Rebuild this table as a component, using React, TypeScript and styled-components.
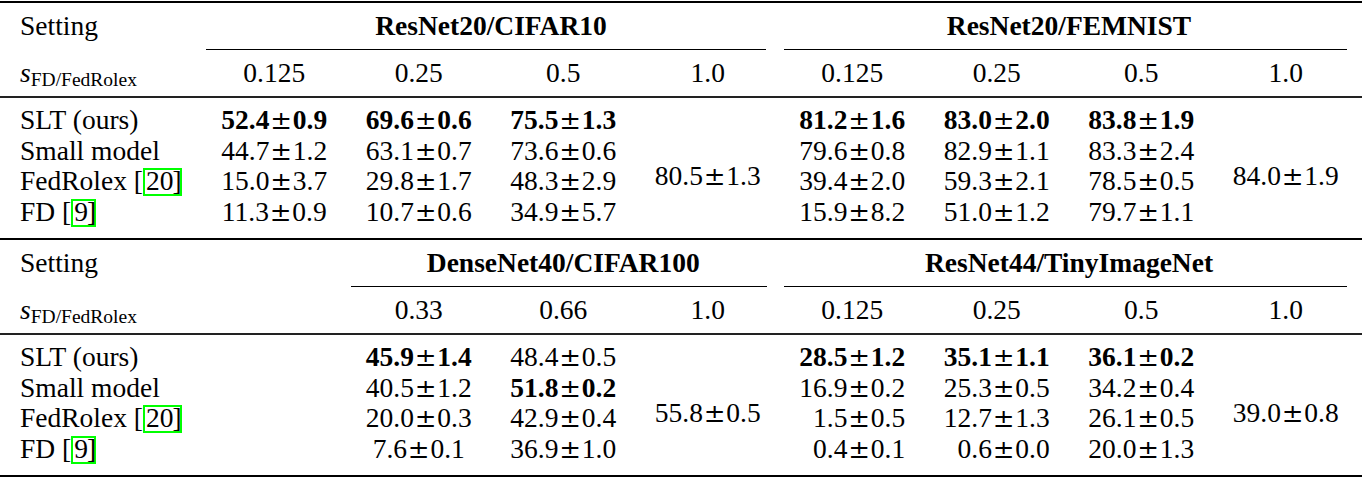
import React from 'react';
import styled, { createGlobalStyle } from 'styled-components';

const GlobalStyle = createGlobalStyle`
  html, body {
    margin: 0;
    padding: 0;
    background: #fff;
  }
  body {
    font-family: "Liberation Serif", "Times New Roman", serif;
    color: #000;
  }
`;

const Table = styled.div`
  width: 1362px;
  padding-top: 1px;
  font-size: 27.5px;
`;

const Rule = styled.div`
  height: 2px;
  background: #000;
`;

// one half of the table: header, cmidrules, sub header, midrule, 4 method rows
const Block = styled.div`
  display: grid;
  grid-template-columns: 202px repeat(8, 144.5px) 1fr;
  grid-template-rows: 46px 1px 46px 2px 7px repeat(4, 30.5px) 11px;
`;

const HeadLabel = styled.div<{ $row: number }>`
  grid-column: 1;
  grid-row: ${p => p.$row};
  padding-left: 20px;
  line-height: 46px;
  white-space: nowrap;
`;

const GroupTitle = styled.div<{ $from: number; $to: number }>`
  grid-column: ${p => p.$from} / ${p => p.$to};
  grid-row: 1;
  text-align: center;
  font-weight: 700;
  line-height: 46px;
  white-space: nowrap;
`;

const CmidRule = styled.div<{ $from: number; $to: number; $trim: number }>`
  grid-column: ${p => p.$from} / ${p => p.$to};
  grid-row: 2;
  background: #000;
  margin: 0 ${p => p.$trim}px 0 4px;
`;

const Ratio = styled.div<{ $col: number }>`
  grid-column: ${p => p.$col};
  grid-row: 3;
  text-align: center;
  line-height: 46px;
`;

const Sym = styled.i`
  font-style: italic;
`;

const Sub = styled.span`
  font-size: 19.5px;
  vertical-align: -3.5px;
  line-height: 0;
`;

const Midrule = styled.div`
  grid-column: 1 / -1;
  grid-row: 4;
  background: #222;
`;

const Method = styled.div<{ $row: number }>`
  grid-column: 1;
  grid-row: ${p => p.$row};
  padding-left: 20px;
  line-height: 30.5px;
  white-space: nowrap;
`;

const CiteBox = styled.span`
  display: inline-block;
  line-height: 21px;
  border: 2px solid #00ff00;
  padding: 0 6px 3px 1px;
`;

const CloseBracket = styled.span`
  margin-left: -9px;
`;

const Value = styled.div<{ $col: number; $row: number }>`
  grid-column: ${p => p.$col};
  grid-row: ${p => p.$row};
  text-align: center;
  line-height: 30.5px;
  white-space: nowrap;
`;

const Merged = styled.div<{ $col: number }>`
  grid-column: ${p => p.$col};
  grid-row: 6 / 10;
  align-self: center;
  padding-top: 20px;
  text-align: center;
  line-height: 30.5px;
  white-space: nowrap;
`;

const Digits = styled.span<{ $bold?: boolean }>`
  font-weight: ${p => (p.$bold ? 700 : 400)};
`;

// the math \pm is wider than the text one
const Pm = styled.span`
  font-family: "DejaVu Serif", "Liberation Serif", serif;
  font-size: 26px;
  font-weight: 400;
  margin: 0 0.03em;
`;

const Ghost = styled.span`
  visibility: hidden;
`;

type Group = { name: string; from: number; to: number; trim: number };
type Half = {
  groups: Group[];
  ratios: string[];
  rows: string[][];
  merged: { col: number; value: string }[];
};

const methods = [
  { name: 'SLT (ours)' },
  { name: 'Small model' },
  { name: 'FedRolex', cite: '20' },
  { name: 'FD', cite: '9' },
];

// '*' = bold, '_' = padded with a hidden digit, '' = empty / merged cell
const halves: Half[] = [
  {
    groups: [
      { name: 'ResNet20/CIFAR10', from: 2, to: 6, trim: 14 },
      { name: 'ResNet20/FEMNIST', from: 6, to: 10, trim: 11 },
    ],
    ratios: ['0.125', '0.25', '0.5', '1.0', '0.125', '0.25', '0.5', '1.0'],
    rows: [
      ['*52.4±0.9', '*69.6±0.6', '*75.5±1.3', '', '*81.2±1.6', '*83.0±2.0', '*83.8±1.9', ''],
      ['44.7±1.2', '63.1±0.7', '73.6±0.6', '', '79.6±0.8', '82.9±1.1', '83.3±2.4', ''],
      ['15.0±3.7', '29.8±1.7', '48.3±2.9', '', '39.4±2.0', '59.3±2.1', '78.5±0.5', ''],
      ['11.3±0.9', '10.7±0.6', '34.9±5.7', '', '15.9±8.2', '51.0±1.2', '79.7±1.1', ''],
    ],
    merged: [
      { col: 5, value: '80.5±1.3' },
      { col: 9, value: '84.0±1.9' },
    ],
  },
  {
    groups: [
      { name: 'DenseNet40/CIFAR100', from: 3, to: 6, trim: 13 },
      { name: 'ResNet44/TinyImageNet', from: 6, to: 10, trim: 11 },
    ],
    ratios: ['', '0.33', '0.66', '1.0', '0.125', '0.25', '0.5', '1.0'],
    rows: [
      ['', '*45.9±1.4', '48.4±0.5', '', '*28.5±1.2', '*35.1±1.1', '*36.1±0.2', ''],
      ['', '40.5±1.2', '*51.8±0.2', '', '16.9±0.2', '25.3±0.5', '34.2±0.4', ''],
      ['', '20.0±0.3', '42.9±0.4', '', '_1.5±0.5', '12.7±1.3', '26.1±0.5', ''],
      ['', '7.6±0.1', '36.9±1.0', '', '_0.4±0.1', '_0.6±0.0', '20.0±1.3', ''],
    ],
    merged: [
      { col: 5, value: '55.8±0.5' },
      { col: 9, value: '39.0±0.8' },
    ],
  },
];

const Figure = ({ raw }: { raw: string }) => {
  const bold = raw.startsWith('*');
  const pad = raw.startsWith('_');
  const [mean, err] = raw.replace(/^[*_]/, '').split('±');
  return (
    <>
      {pad && <Ghost>0</Ghost>}
      <Digits $bold={bold}>{mean}</Digits>
      <Pm>±</Pm>
      <Digits $bold={bold}>{err}</Digits>
    </>
  );
};

const HalfTable = ({ half }: { half: Half }) => (
  <Block>
    <HeadLabel $row={1}>Setting</HeadLabel>
    {half.groups.map(g => (
      <React.Fragment key={g.name}>
        <GroupTitle $from={g.from} $to={g.to}>{g.name}</GroupTitle>
        <CmidRule $from={g.from} $to={g.to} $trim={g.trim} />
      </React.Fragment>
    ))}
    <HeadLabel $row={3}>
      <Sym>s</Sym>
      <Sub>FD/FedRolex</Sub>
    </HeadLabel>
    {half.ratios.map((r, i) =>
      r ? <Ratio key={i} $col={i + 2}>{r}</Ratio> : null
    )}
    <Midrule />
    {methods.map((m, ri) => (
      <React.Fragment key={m.name}>
        <Method $row={ri + 6}>
          {m.name}
          {m.cite && (
            <>
              {' ['}
              <CiteBox>{m.cite}</CiteBox>
              <CloseBracket>]</CloseBracket>
            </>
          )}
        </Method>
        {half.rows[ri].map((cell, ci) =>
          cell ? (
            <Value key={ci} $col={ci + 2} $row={ri + 6}>
              <Figure raw={cell} />
            </Value>
          ) : null
        )}
      </React.Fragment>
    ))}
    {half.merged.map(mg => (
      <Merged key={mg.col} $col={mg.col}>
        <Figure raw={mg.value} />
      </Merged>
    ))}
  </Block>
);

const App = () => (
  <>
    <GlobalStyle />
    <Table>
      <Rule />
      <HalfTable half={halves[0]} />
      <Rule />
      <HalfTable half={halves[1]} />
      <Rule />
    </Table>
  </>
);

export default App;
